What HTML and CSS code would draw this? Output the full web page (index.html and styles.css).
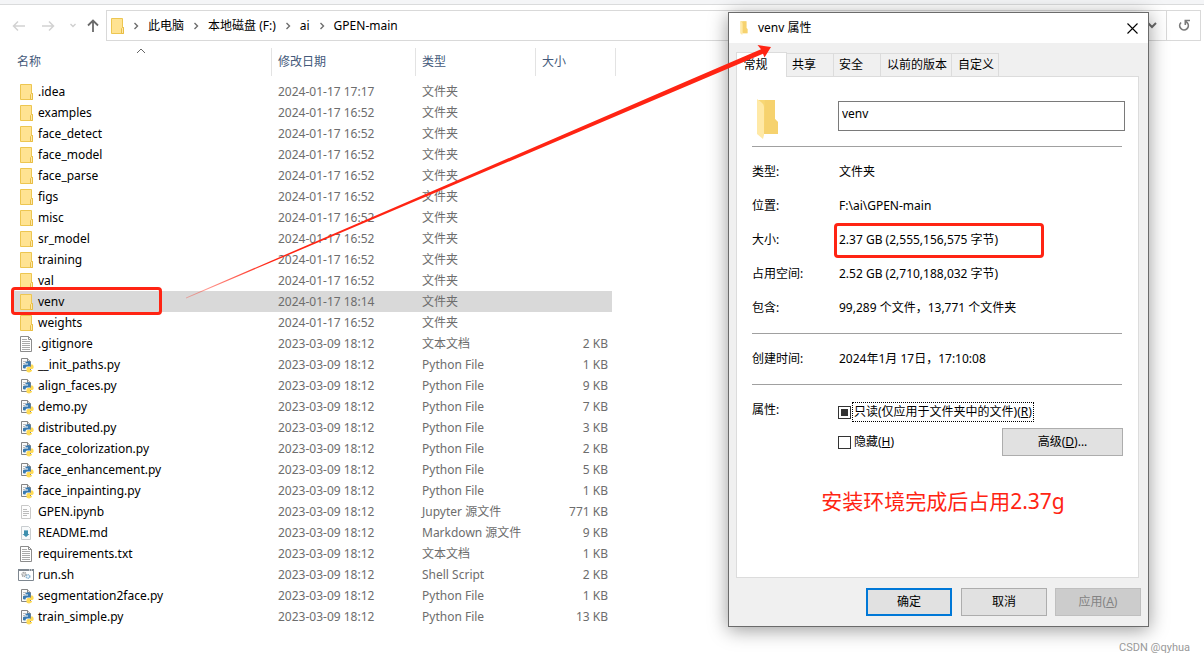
FILE: index.html
```html
<!DOCTYPE html>
<html lang="zh-CN">
<head>
<meta charset="utf-8">
<title>GPEN-main</title>
<link rel="stylesheet" href="styles.css">
</head>
<body>
<svg class="sprite" aria-hidden="true">
  <defs>
    <symbol id="i-folder" viewBox="0 0 16 16">
      <path d="M2.500.5h11v9h1v6h-12z" fill="#ffe392" stroke="#edc651"/>
      <path d="M12.500 15.500v-5l1-1h1v6z" fill="#ffe9a8" stroke="#e8bd45"/>
    </symbol>
    <symbol id="i-text" viewBox="0 0 16 16">
      <path d="M2.500.5h8l3 3v12h-11z" fill="#fff" stroke="#8c8c8c"/>
      <path d="M10.500.5v3h3" fill="none" stroke="#8c8c8c"/>
      <path d="M4 3.500h5M4 5.500h8M4 7.500h8M4 9.500h8M4 11.500h8M4 13.500h8" stroke="#aaa"/>
    </symbol>
    <symbol id="i-note" viewBox="0 0 16 16">
      <path d="M3.500 1.500h7l2 2v11h-9z" fill="#fdfdfd" stroke="#c9c9c9"/>
      <path d="M5 5.500h4M5 7.500h6M5 9.500h6M5 11.500h4" stroke="#bbb"/>
    </symbol>
    <symbol id="i-md" viewBox="0 0 16 16">
      <path d="M3.500 1.500h7l2 2v11h-9z" fill="#f8fafb" stroke="#c9cdd0"/>
      <path d="M6 5l1 .8L8 5l1 .8L10 5v4h1.500L8 12 4.500 9H6z" fill="#3e8fae"/>
    </symbol>
    <symbol id="i-py" viewBox="0 0 16 16">
      <path d="M3.500 1.500h6l3 3v9h-9z" fill="#fafafa" stroke="#858585"/>
      <path d="M9.500 1.500v3h3" fill="#ddd" stroke="#858585"/>
      <path d="M5 4.500h3M5 6.500h2" stroke="#bbb"/>
      <path d="M7.500 5Q10 3.500 12.500 5V8.500Q12.500 9.500 11.500 9.500H9Q7.500 9.500 7.500 11.500H6Q4.500 11 5 8.500Q5 7.500 7 7.500h3V6.500H7.500z" fill="#3a7ab0"/>
      <path d="M13 7.500h1.500Q16 8.500 15.500 11Q15 12 14 12h-2v1h2v1Q11.500 16.500 8.500 14.500v-3Q8.500 10 10 10h2Q13 10 13 8.500z" fill="#ffdb55"/>
    </symbol>
    <symbol id="i-sh" viewBox="0 0 16 16">
      <path d="M.500 2.500h15v11H.500z" fill="#fff" stroke="#7e8790"/>
      <path d="M0 3h16" stroke="#7e8790" stroke-width="2"/>
      <path d="M11 3h1M13 3h1" stroke="#fff"/>
      <circle cx="6" cy="7.500" r="2" fill="#ddd" stroke="#a0a0a0" stroke-width="1.500" stroke-dasharray="1.200 .6"/>
      <circle cx="10" cy="9.500" r="1.800" fill="#e5f2fb" stroke="#8db4d0" stroke-width="1.500" stroke-dasharray="1.200 .6"/>
    </symbol>
    <symbol id="i-crumb" viewBox="0 0 6 8">
      <path d="M1.500 1l3 3-3 3" fill="none" stroke="#6e6e6e" stroke-width="1.400"/>
    </symbol>
    <symbol id="i-folder3d" viewBox="0 0 22 40">
      <path d="M1 1h17v19l3 3v12H6z" fill="#f8d775"/>
      <path d="M8 1h10v19l3 3v12H7z" fill="#f5cf69" opacity=".6"/>
      <path d="M0 0l4 3q3 2 3 5v28l-1 4-6-5z" fill="#ffe9a6"/>
    </symbol>
  </defs>
</svg>

<main class="explorer">
  <div class="ribbon-edge"></div>
  <nav class="toolbar" aria-label="导航">
    <div class="history">
      <button class="nav-btn" type="button" aria-label="后退" disabled><svg width="14" height="12" viewBox="0 0 14 12"><path d="M13 6H1.500M6 1.500L1.500 6 6 10.500" fill="none" stroke="#d2d2d2" stroke-width="1.500"/></svg></button>
      <button class="nav-btn" type="button" aria-label="前进" disabled><svg width="14" height="12" viewBox="0 0 14 12"><path d="M1 6h11.500M8 1.500L12.500 6 8 10.500" fill="none" stroke="#d2d2d2" stroke-width="1.500"/></svg></button>
      <button class="nav-btn" type="button" aria-label="最近" disabled><svg width="6" height="5" viewBox="0 0 6 5"><path d="M.5 1L3 3.500 5.500 1" fill="none" stroke="#cfcfcf" stroke-width="1.400"/></svg></button>
      <button class="nav-btn" type="button" aria-label="上移"><svg width="12" height="13" viewBox="0 0 12 13"><path d="M6 13V1.500M1 6.500L6 1.500l5 5" fill="none" stroke="#6a6a6a" stroke-width="1.800"/></svg></button>
    </div>
    <div class="address">
      <div class="crumbs">
        <svg class="icon"><use href="#i-folder"/></svg>
        <svg class="sep"><use href="#i-crumb"/></svg><a href="#pc">此电脑</a>
        <svg class="sep"><use href="#i-crumb"/></svg><a href="#f">本地磁盘 (F:)</a>
        <svg class="sep"><use href="#i-crumb"/></svg><a href="#ai">ai</a>
        <svg class="sep"><use href="#i-crumb"/></svg><a href="#gpen">GPEN-main</a>
      </div>
      <button class="drop" type="button" aria-label="历史记录"><svg width="10" height="7" viewBox="0 0 10 7"><path d="M1 1l4 4 4-4" fill="none" stroke="#6a6a6a" stroke-width="2"/></svg></button>
      <button class="refresh" type="button" aria-label="刷新"><svg width="12" height="13" viewBox="0 0 12 13"><path d="M3 3.500A4.300 4.300 0 1 0 9.300 3.800L7.500 2" fill="none" stroke="#7a7a7a" stroke-width="1.700"/><path d="M7.300 6V1.500H12" fill="none" stroke="#7a7a7a" stroke-width="1.600"/></svg></button>
    </div>
  </nav>

  <table class="files">
    <colgroup><col class="c-name"><col class="c-date"><col class="c-type"><col class="c-size"></colgroup>
    <thead>
      <tr>
        <th><div class="head head-name">名称<svg class="sort" width="10" height="6" viewBox="0 0 10 6"><path d="M1 5l4-4 4 4" fill="none" stroke="#666"/></svg></div></th>
        <th><div class="head">修改日期</div></th>
        <th><div class="head">类型</div></th>
        <th><div class="head head-last">大小</div></th>
      </tr>
    </thead>
    <tbody>
      <tr><td><svg class="icon"><use href="#i-folder"/></svg>.idea</td><td>2024-01-17 17:17</td><td>文件夹</td><td></td></tr>
      <tr><td><svg class="icon"><use href="#i-folder"/></svg>examples</td><td>2024-01-17 16:52</td><td>文件夹</td><td></td></tr>
      <tr><td><svg class="icon"><use href="#i-folder"/></svg>face_detect</td><td>2024-01-17 16:52</td><td>文件夹</td><td></td></tr>
      <tr><td><svg class="icon"><use href="#i-folder"/></svg>face_model</td><td>2024-01-17 16:52</td><td>文件夹</td><td></td></tr>
      <tr><td><svg class="icon"><use href="#i-folder"/></svg>face_parse</td><td>2024-01-17 16:52</td><td>文件夹</td><td></td></tr>
      <tr><td><svg class="icon"><use href="#i-folder"/></svg>figs</td><td>2024-01-17 16:52</td><td>文件夹</td><td></td></tr>
      <tr><td><svg class="icon"><use href="#i-folder"/></svg>misc</td><td>2024-01-17 16:52</td><td>文件夹</td><td></td></tr>
      <tr><td><svg class="icon"><use href="#i-folder"/></svg>sr_model</td><td>2024-01-17 16:52</td><td>文件夹</td><td></td></tr>
      <tr><td><svg class="icon"><use href="#i-folder"/></svg>training</td><td>2024-01-17 16:52</td><td>文件夹</td><td></td></tr>
      <tr><td><svg class="icon"><use href="#i-folder"/></svg>val</td><td>2024-01-17 16:52</td><td>文件夹</td><td></td></tr>
      <tr class="selected"><td><svg class="icon"><use href="#i-folder"/></svg>venv<span class="mark mark-row"></span></td><td>2024-01-17 18:14</td><td>文件夹</td><td></td></tr>
      <tr><td><svg class="icon"><use href="#i-folder"/></svg>weights</td><td>2024-01-17 16:52</td><td>文件夹</td><td></td></tr>
      <tr><td><svg class="icon"><use href="#i-text"/></svg>.gitignore</td><td>2023-03-09 18:12</td><td>文本文档</td><td>2 KB</td></tr>
      <tr><td><svg class="icon"><use href="#i-py"/></svg>__init_paths.py</td><td>2023-03-09 18:12</td><td>Python File</td><td>1 KB</td></tr>
      <tr><td><svg class="icon"><use href="#i-py"/></svg>align_faces.py</td><td>2023-03-09 18:12</td><td>Python File</td><td>9 KB</td></tr>
      <tr><td><svg class="icon"><use href="#i-py"/></svg>demo.py</td><td>2023-03-09 18:12</td><td>Python File</td><td>7 KB</td></tr>
      <tr><td><svg class="icon"><use href="#i-py"/></svg>distributed.py</td><td>2023-03-09 18:12</td><td>Python File</td><td>3 KB</td></tr>
      <tr><td><svg class="icon"><use href="#i-py"/></svg>face_colorization.py</td><td>2023-03-09 18:12</td><td>Python File</td><td>2 KB</td></tr>
      <tr><td><svg class="icon"><use href="#i-py"/></svg>face_enhancement.py</td><td>2023-03-09 18:12</td><td>Python File</td><td>5 KB</td></tr>
      <tr><td><svg class="icon"><use href="#i-py"/></svg>face_inpainting.py</td><td>2023-03-09 18:12</td><td>Python File</td><td>1 KB</td></tr>
      <tr><td><svg class="icon"><use href="#i-note"/></svg>GPEN.ipynb</td><td>2023-03-09 18:12</td><td>Jupyter 源文件</td><td>771 KB</td></tr>
      <tr><td><svg class="icon"><use href="#i-md"/></svg>README.md</td><td>2023-03-09 18:12</td><td>Markdown 源文件</td><td>9 KB</td></tr>
      <tr><td><svg class="icon"><use href="#i-text"/></svg>requirements.txt</td><td>2023-03-09 18:12</td><td>文本文档</td><td>1 KB</td></tr>
      <tr><td><svg class="icon"><use href="#i-sh"/></svg>run.sh</td><td>2023-03-09 18:12</td><td>Shell Script</td><td>2 KB</td></tr>
      <tr><td><svg class="icon"><use href="#i-py"/></svg>segmentation2face.py</td><td>2023-03-09 18:12</td><td>Python File</td><td>1 KB</td></tr>
      <tr><td><svg class="icon"><use href="#i-py"/></svg>train_simple.py</td><td>2023-03-09 18:12</td><td>Python File</td><td>13 KB</td></tr>
    </tbody>
  </table>
</main>

<section class="dialog" role="dialog" aria-labelledby="dlg-title">
  <header class="titlebar">
    <svg class="title-icon" width="10" height="14"><use href="#i-folder3d"/></svg>
    <h1 id="dlg-title">venv 属性</h1>
    <button class="close" type="button" aria-label="关闭"><svg width="11" height="11" viewBox="0 0 11 11"><path d="M.5.5l10 10M10.500.5l-10 10" stroke="#000" stroke-width="1.100"/></svg></button>
  </header>
  <div class="body">
    <div class="tabs" role="tablist">
      <button class="tab active" type="button" role="tab" aria-selected="true">常规</button>
      <button class="tab" type="button" role="tab">共享</button>
      <button class="tab" type="button" role="tab">安全</button>
      <button class="tab wide" type="button" role="tab">以前的版本</button>
      <button class="tab wide" type="button" role="tab">自定义</button>
    </div>
    <div class="panel" role="tabpanel">
      <div class="identity">
        <svg width="22" height="40"><use href="#i-folder3d"/></svg>
        <input class="name" type="text" value="venv" aria-label="名称">
      </div>
      <dl class="facts">
        <dt>类型:</dt><dd>文件夹</dd>
        <dt>位置:</dt><dd>F:\ai\GPEN-main</dd>
        <dt>大小:</dt><dd class="marked">2.37 GB (2,555,156,575 字节)<span class="mark mark-size"></span></dd>
        <dt>占用空间:</dt><dd>2.52 GB (2,710,188,032 字节)</dd>
        <dt>包含:</dt><dd>99,289 个文件，13,771 个文件夹</dd>
      </dl>
      <dl class="facts">
        <dt>创建时间:</dt><dd>2024年1月 17日，17:10:08</dd>
      </dl>
      <div class="attrs">
        <div class="attrs-label">属性:</div>
        <div class="attrs-body">
          <label class="check"><input class="mixed" type="checkbox"><span class="focus">只读(仅应用于文件夹中的文件)(<u>R</u>)</span></label>
          <div class="attrs-row">
            <label class="check"><input type="checkbox"><span>隐藏(<u>H</u>)</span></label>
            <button class="btn advanced" type="button">高级(<u>D</u>)...</button>
          </div>
        </div>
      </div>
      <p class="note">安装环境完成后占用2.37g</p>
    </div>
    <footer class="actions">
      <button class="btn default" type="button">确定</button>
      <button class="btn" type="button">取消</button>
      <button class="btn" type="button" disabled>应用(<u>A</u>)</button>
    </footer>
  </div>
</section>

<svg class="arrow" width="620" height="270" viewBox="170 40 620 270" aria-hidden="true">
  <defs><linearGradient id="fade" gradientUnits="userSpaceOnUse" x1="186" y1="298" x2="270" y2="262"><stop offset="0" stop-color="#ff2413" stop-opacity=".3"/><stop offset="1" stop-color="#ff2413"/></linearGradient></defs>
  <path d="M186 297.600L690 79.800 761 49.300 757.500 45 771 47 764.500 57.500 763 53.800 690 84.800 186 298.400z" fill="url(#fade)"/>
</svg>
<div class="watermark">CSDN @qyhua</div>
</body>
</html>
```
FILE: styles.css
```css
* { box-sizing: border-box; }
body {
  margin: 0;
  background: #fff;
  color: #000;
  font: 12px/20px "Noto Sans", "Noto Sans CJK SC", sans-serif;
  position: relative;
  min-height: 100vh;
}
button, input { font: inherit; color: inherit; margin: 0; }
button { padding: 0; border: 0; background: none; }
.sprite { position: absolute; width: 0; height: 0; }
.icon { width: 16px; height: 16px; flex: none; }

/* Explorer window */
.ribbon-edge { height: 5px; background: #f4f5f7; border-bottom: 1px solid #dadbdc; }
.toolbar { display: flex; padding: 5px 3px 0 0; }
.history { width: 106px; display: flex; align-items: center; padding-left: 12px; gap: 15px; }
.nav-btn { display: flex; }
.nav-btn:nth-child(3) { margin-right: -4px; }
.nav-btn svg { display: block; }
.address { flex: 1; height: 31px; display: flex; border: 1px solid #d9d9d9; }
.crumbs { flex: 1; display: flex; align-items: center; padding-left: 2px; }
.crumbs a { color: #000; text-decoration: none; }
.sep { width: 6px; height: 8px; margin: 0 9px; }
.icon + .sep { margin-left: 8px; }
.drop { width: 28px; display: flex; align-items: center; justify-content: center; }
.refresh { width: 34px; border-left: 1px solid #d9d9d9; display: flex; align-items: center; justify-content: center; }

.files { table-layout: fixed; width: 600px; margin: 7px 0 0 12px; border-collapse: collapse; }
.c-name { width: 260px; }
.c-date { width: 144px; }
.c-type { width: 120px; }
.c-size { width: 76px; }
.files th { padding: 0 0 5px; font-weight: 400; text-align: left; color: #44597a; }
.head { position: relative; height: 28px; line-height: 27px; padding-left: 6px; border-right: 1px solid #e3e3e3; }
.head-name { padding-left: 5px; }
.head-last { margin-right: -4px; }
.sort { position: absolute; left: 48%; top: 0; }
.files td { height: 21px; padding: 0 4px 0 6px; color: #6d6d6d; white-space: nowrap; }
.files td:first-child { color: #000; display: flex; align-items: center; gap: 4px; position: relative; }
.files td:last-child { text-align: right; }
.selected { background: #d9d9d9; }

.mark { position: absolute; border: 3px solid #ff2413; border-radius: 4px; }
.mark-row { left: -1px; top: -4px; width: 151px; height: 28px; }
.mark-size { left: -5px; top: -7px; width: 210px; height: 35px; }

/* Properties dialog */
.dialog {
  position: absolute;
  left: 728px;
  top: 12px;
  width: 421px;
  background: #f0f0f0;
  border: 1px solid #6b6b6b;
  box-shadow: 0 3px 18px rgba(0, 0, 0, .4);
}
.titlebar { height: 30px; display: flex; align-items: center; padding: 0 10px; background: #fff; }
.titlebar h1 { flex: 1; margin: 0 0 0 9px; font-size: 12px; font-weight: 400; }
.close { display: flex; }
.body { padding: 9px 7px 10px; }
.tabs { display: flex; align-items: flex-end; }
.tab { height: 23px; width: 47px; padding-right: 12px; border: 1px solid #dcdcdc; border-width: 1px 1px 0 0; text-align: center; white-space: nowrap; }
.tab.active { width: 51px; height: 25px; background: #fff; border-left-width: 1px; margin-bottom: -1px; position: relative; }
.tab.wide { width: auto; padding: 0 4px 0 6px; }
.panel { margin-right: 2px; height: 502px; padding: 22px 16px 0 15px; background: #fff; border: 1px solid #dcdcdc; }
.identity { display: flex; align-items: flex-start; justify-content: space-between; height: 47px; padding-left: 5px; margin-right: -3px; }
.name { width: 287px; height: 30px; margin-top: 2px; padding: 0 3px 5px; border: 1px solid #7a7a7a; background: #fff; }
.facts { display: grid; grid-template-columns: 87px 1fr; row-gap: 14px; margin: 0; padding: 15px 0; border-top: 1px solid #a0a0a0; }
.facts dd { margin: 0; white-space: nowrap; }
.marked { position: relative; }
.attrs { display: flex; border-top: 1px solid #a0a0a0; padding-top: 15px; }
.attrs-label { width: 86px; }
.attrs-body { flex: 1; display: flex; flex-direction: column; gap: 7px; padding-top: 3px; margin-right: -1px; }
.attrs-row { display: flex; justify-content: space-between; align-items: center; }
.check { display: flex; align-items: center; gap: 2px; white-space: nowrap; }
.check input { appearance: none; width: 13px; height: 13px; border: 1px solid #333; background: #fff; }
.check .mixed { background: #333; box-shadow: inset 0 0 0 2px #fff; }
.check span { line-height: 18px; padding: 0 1px; }
.focus { outline: 1px dotted #000; }
.btn { width: 86px; height: 28px; border: 1px solid #adadad; background: #e1e1e1; text-align: center; }
.advanced { width: 121px; }
.note { margin: 29px 0 0 12px; text-align: center; font-size: 21px; line-height: 32px; color: #ff2413; }
.actions { display: flex; justify-content: flex-end; gap: 8px; padding-top: 10px; }
.default { border: 2px solid #0078d7; margin-right: 1px; }
.btn:disabled { background: #ccc; border-color: #bfbfbf; color: #838383; }

.arrow { position: absolute; left: 170px; top: 40px; pointer-events: none; }
.watermark { position: absolute; right: 14px; bottom: 5px; color: #999; font: 11px/18px Roboto, sans-serif; }
```
